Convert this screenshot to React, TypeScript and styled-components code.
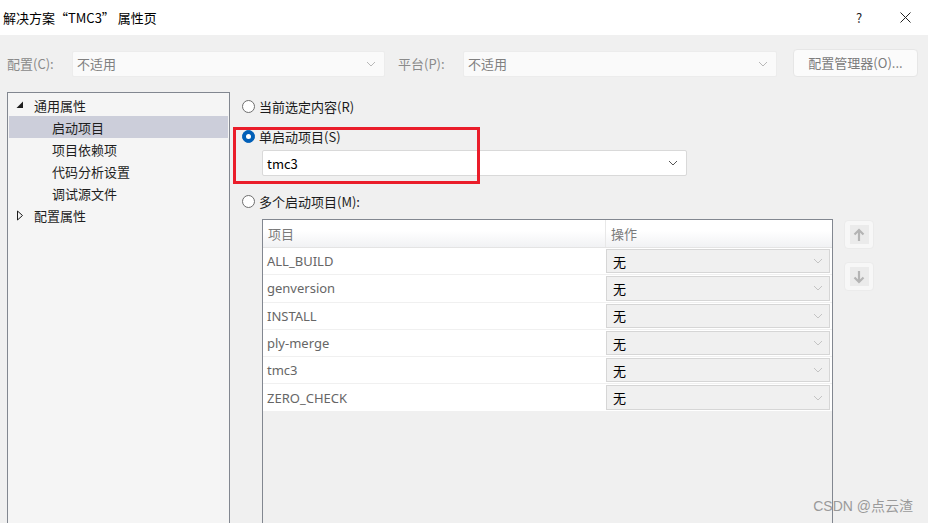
import React from "react";
import styled, { createGlobalStyle } from "styled-components";

const GlobalStyle = createGlobalStyle`
  html, body {
    margin: 0;
    padding: 0;
    background: #f0f0f0;
  }
  body {
    font-family: "Noto Sans CJK SC", "Noto Sans", "Liberation Sans", sans-serif;
    font-size: 13px;
    color: #1b1b1b;
  }
`;

const Window = styled.div`
  width: 928px;
  height: 523px;
  overflow: hidden;
  display: flex;
  flex-direction: column;
  background: #f0f0f0;
  position: relative;
`;

const TitleBar = styled.div`
  height: 35px;
  flex: none;
  background: #fff;
  display: flex;
  align-items: center;
  padding-left: 3px;
`;

const Title = styled.div`
  flex: 1;
  font-size: 13px;
  color: #000;
`;

const TitleButton = styled.div`
  width: 46px;
  height: 35px;
  display: flex;
  align-items: center;
  justify-content: center;
  color: #222;
  font-size: 13px;
`;

const Toolbar = styled.div`
  height: 57px;
  flex: none;
  display: flex;
  align-items: center;
  padding: 0 10px 0 7px;
`;

const ToolLabel = styled.span`
  color: #8a8a8a;
  width: 65px;
  flex: none;
`;

const Combo = styled.div<{ $width: number; $light?: boolean }>`
  width: ${(p) => p.$width}px;
  height: 26px;
  box-sizing: border-box;
  display: flex;
  align-items: center;
  justify-content: space-between;
  padding: 0 8px 0 4px;
  background: ${(p) => (p.$light ? "#fafafa" : "#fff")};
  border: 1px solid ${(p) => (p.$light ? "#ececec" : "#d9d9d9")};
  border-radius: 2px;
  color: ${(p) => (p.$light ? "#808080" : "#000")};
  flex: none;
`;

const ToolGap = styled.div<{ $w: number }>`
  width: ${(p) => p.$w}px;
  flex: none;
`;

const ManagerButton = styled.div`
  width: 126px;
  height: 28px;
  box-sizing: border-box;
  display: flex;
  align-items: center;
  justify-content: center;
  background: #fbfbfb;
  border: 1px solid #e6e6e6;
  border-radius: 4px;
  color: #7c7c7c;
  margin-top: -2px;
`;

const Main = styled.div`
  flex: 1;
  display: flex;
  padding-left: 7px;
  min-height: 0;
`;

const Tree = styled.div`
  width: 223px;
  height: 460px;
  box-sizing: border-box;
  flex: none;
  border: 1px solid #828790;
  background: #f5f5f5;
  padding: 1px 1px 0;
`;

const TreeRow = styled.div<{ $depth: number; $selected?: boolean }>`
  height: 22px;
  display: flex;
  align-items: center;
  padding-left: ${(p) => (p.$depth ? 43 : 7)}px;
  background: ${(p) => (p.$selected ? "#ccceda" : "transparent")};
  color: #1e1e1e;
`;

const Twisty = styled.span`
  width: 18px;
  height: 22px;
  display: flex;
  align-items: center;
  flex: none;
`;

const Right = styled.div`
  flex: 1;
  display: flex;
  flex-direction: column;
  padding: 5px 0 0 12px;
  position: relative;
`;

const RadioRow = styled.div<{ $mt: number }>`
  height: 22px;
  margin-top: ${(p) => p.$mt}px;
  display: flex;
  align-items: center;
  gap: 4px;
`;

const Radio = styled.span<{ $checked?: boolean }>`
  width: 13px;
  height: 13px;
  box-sizing: border-box;
  border-radius: 50%;
  flex: none;
  display: flex;
  align-items: center;
  justify-content: center;
  background: ${(p) => (p.$checked ? "#005fb8" : "#fff")};
  border: 1px solid ${(p) => (p.$checked ? "#005fb8" : "#6f6f6f")};
  &::after {
    content: "";
    width: 5px;
    height: 5px;
    border-radius: 50%;
    background: #fff;
    display: ${(p) => (p.$checked ? "block" : "none")};
  }
`;

const Indented = styled.div<{ $mt: number }>`
  margin: ${(p) => p.$mt}px 0 0 20px;
  display: flex;
  align-items: flex-start;
`;

const Highlight = styled.div`
  position: absolute;
  left: 3px;
  top: 35px;
  width: 247px;
  height: 57px;
  box-sizing: border-box;
  border: 3px solid #ea1d2a;
  pointer-events: none;
`;

const Grid = styled.div`
  width: 571px;
  height: 320px;
  box-sizing: border-box;
  border: 1px solid #828790;
  border-bottom: none;
  background: #f0f0f0;
  flex: none;
`;

const HeaderRow = styled.div`
  display: grid;
  grid-template-columns: 342px 1fr;
  height: 27px;
  background: linear-gradient(#ffffff 0%, #ffffff 40%, #f1f2f4 100%);
  border-bottom: 1px solid #e4e4e4;
  color: #7a7a7a;
`;

const HeaderCell = styled.div<{ $divider?: boolean }>`
  display: flex;
  align-items: center;
  padding-left: 5px;
  border-left: ${(p) => (p.$divider ? "1px solid #e8e8e8" : "none")};
`;

const Row = styled.div`
  display: grid;
  grid-template-columns: 342px 1fr;
  height: 27.3px;
  border-bottom: 1px solid #f0f0f0;
  box-sizing: border-box;
  background: #fff;
`;

const NameCell = styled.div`
  display: flex;
  align-items: center;
  padding-left: 4px;
  color: #666;
  font-size: 13px;
  font-family: "Noto Sans", "Liberation Sans", sans-serif;
`;

const ActionCell = styled.div`
  padding: 1px 2px 1px 1px;
  background: #fff;
`;

const ActionBox = styled.div`
  height: 100%;
  box-sizing: border-box;
  border: 1px solid #d6d6d6;
  background: #f0f0f0;
  display: flex;
  align-items: center;
  justify-content: space-between;
  padding: 0 6px 0 6px;
  color: #000;
`;

const SideButtons = styled.div`
  margin-left: 11px;
  display: flex;
  flex-direction: column;
  gap: 13px;
  padding-top: 1px;
`;

const ArrowButton = styled.div`
  width: 30px;
  height: 29px;
  box-sizing: border-box;
  border: 1px solid #ebebeb;
  border-radius: 4px;
  background: #f7f7f7;
  display: flex;
  align-items: center;
  justify-content: center;
`;

const ArrowInner = styled.div`
  width: 19px;
  height: 19px;
  background: #ebebeb;
  display: flex;
  align-items: center;
  justify-content: center;
`;

const Watermark = styled.div`
  position: absolute;
  right: 15px;
  bottom: 8px;
  color: #9a9a9a;
  font-size: 14px;
  font-family: "Liberation Sans", "Noto Sans CJK SC", sans-serif;
`;

const Chevron = ({ color = "#a0a0a0" }: { color?: string }) => (
  <svg width="10" height="6" viewBox="0 0 10 6">
    <path d="M1 1 L5 5 L9 1" fill="none" stroke={color} strokeWidth="1" />
  </svg>
);

const Arrow = ({ down }: { down?: boolean }) => (
  <svg width="12" height="14" viewBox="0 0 12 14" style={{ transform: down ? "rotate(180deg)" : undefined }}>
    <path d="M6 13 V2 M1.5 6.5 L6 2 L10.5 6.5" fill="none" stroke="#b4b4b4" strokeWidth="2.2" />
  </svg>
);

const projects = ["ALL_BUILD", "genversion", "INSTALL", "ply-merge", "tmc3", "ZERO_CHECK"];

export default function App() {
  return (
    <>
      <GlobalStyle />
      <Window>
        <TitleBar>
          <Title>解决方案“TMC3” 属性页</Title>
          <TitleButton>?</TitleButton>
          <TitleButton>
            <svg width="11" height="11" viewBox="0 0 11 11">
              <path d="M0.5 0.5 L10.5 10.5 M10.5 0.5 L0.5 10.5" stroke="#222" strokeWidth="1" />
            </svg>
          </TitleButton>
        </TitleBar>

        <Toolbar>
          <ToolLabel>配置(C):</ToolLabel>
          <Combo $width={313} $light>
            <span>不适用</span>
            <Chevron color="#b8b8b8" />
          </Combo>
          <ToolGap $w={13} />
          <ToolLabel>平台(P):</ToolLabel>
          <Combo $width={314} $light>
            <span>不适用</span>
            <Chevron color="#b8b8b8" />
          </Combo>
          <ToolGap $w={16} />
          <ManagerButton>配置管理器(O)...</ManagerButton>
        </Toolbar>

        <Main>
          <Tree>
            <TreeRow $depth={0}>
              <Twisty>
                <svg width="8" height="8" viewBox="0 0 8 8">
                  <polygon points="0.5,7 7,7 7,0.5" fill="#1e1e1e" />
                </svg>
              </Twisty>
              通用属性
            </TreeRow>
            <TreeRow $depth={1} $selected>启动项目</TreeRow>
            <TreeRow $depth={1}>项目依赖项</TreeRow>
            <TreeRow $depth={1}>代码分析设置</TreeRow>
            <TreeRow $depth={1}>调试源文件</TreeRow>
            <TreeRow $depth={0}>
              <Twisty>
                <svg width="8" height="11" viewBox="0 0 8 11">
                  <polygon points="1.5,1 6.5,5.5 1.5,10" fill="none" stroke="#1e1e1e" strokeWidth="1" />
                </svg>
              </Twisty>
              配置属性
            </TreeRow>
          </Tree>

          <Right>
            <RadioRow $mt={0}>
              <Radio />
              <span>当前选定内容(R)</span>
            </RadioRow>
            <RadioRow $mt={11}>
              <Radio $checked />
              <span>单启动项目(S)</span>
            </RadioRow>
            <Indented $mt={4}>
              <Combo $width={425}>
                <span>tmc3</span>
                <Chevron color="#555" />
              </Combo>
            </Indented>
            <RadioRow $mt={16}>
              <Radio />
              <span>多个启动项目(M):</span>
            </RadioRow>
            <Indented $mt={8}>
              <Grid>
                <HeaderRow>
                  <HeaderCell>项目</HeaderCell>
                  <HeaderCell $divider>操作</HeaderCell>
                </HeaderRow>
                {projects.map((name) => (
                  <Row key={name}>
                    <NameCell>{name}</NameCell>
                    <ActionCell>
                      <ActionBox>
                        <span>无</span>
                        <Chevron color="#c4c4c4" />
                      </ActionBox>
                    </ActionCell>
                  </Row>
                ))}
              </Grid>
              <SideButtons>
                <ArrowButton>
                  <ArrowInner>
                    <Arrow />
                  </ArrowInner>
                </ArrowButton>
                <ArrowButton>
                  <ArrowInner>
                    <Arrow down />
                  </ArrowInner>
                </ArrowButton>
              </SideButtons>
            </Indented>
            <Highlight />
          </Right>
        </Main>
        <Watermark>CSDN @点云渣</Watermark>
      </Window>
    </>
  );
}
